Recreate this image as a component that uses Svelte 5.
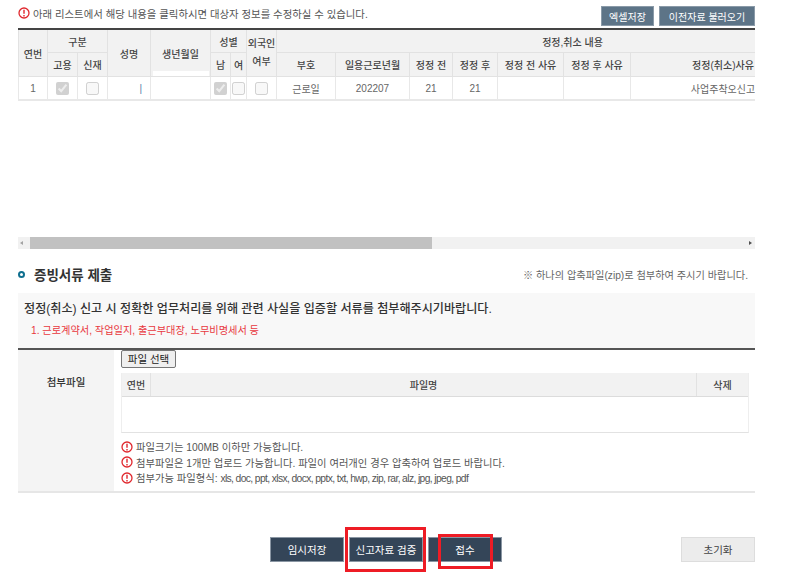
<script>
    const notes = [
        { text: "파일크기는 100MB 이하만 가능합니다." },
        { text: "첨부파일은 1개만 업로드 가능합니다. 파일이 여러개인 경우 압축하여 업로드 바랍니다." },
        { text: "첨부가능 파일형식: ", formats: "xls, doc, ppt, xlsx, docx, pptx, txt, hwp, zip, rar, alz, jpg, jpeg, pdf" }
    ];
</script>

{#snippet alertIcon()}
    <svg class="alert" viewBox="0 0 12 12" width="12" height="12">
        <circle cx="6" cy="6" r="5" fill="#fff" stroke="#e0282e" stroke-width="1.3" />
        <path d="M6 2.8v4" stroke="#e0282e" stroke-width="1.4" />
        <path d="M6 8v1.4" stroke="#e0282e" stroke-width="1.4" />
    </svg>
{/snippet}

<main class="page">
    <div class="top-bar">
        <p class="notice">{@render alertIcon()}아래 리스트에서 해당 내용을 클릭하시면 대상자 정보를 수정하실 수 있습니다.</p>
        <div class="top-buttons">
            <button class="btn-slate excel">엑셀저장</button>
            <button class="btn-slate prev">이전자료 불러오기</button>
        </div>
    </div>

    <div class="list-wrap">
        <table class="list">
            <colgroup>
                <col style="width:29px" /><col style="width:30px" /><col style="width:30px" />
                <col style="width:43px" /><col style="width:60px" /><col style="width:20px" />
                <col style="width:16px" /><col style="width:30px" /><col style="width:59px" />
                <col style="width:74px" /><col style="width:43px" /><col style="width:45px" />
                <col style="width:66px" /><col style="width:67px" /><col style="width:185px" />
                <col style="width:53px" />
            </colgroup>
            <thead>
                <tr class="r1">
                    <th rowspan="2">연번</th>
                    <th colspan="2">구분</th>
                    <th rowspan="2">성명</th>
                    <th rowspan="2">생년월일</th>
                    <th colspan="2">성별</th>
                    <th rowspan="2" class="foreign"><span>외국인</span><span>여부</span></th>
                    <th colspan="8">정정,취소 내용</th>
                </tr>
                <tr class="r2">
                    <th>고용</th><th>신재</th><th>남</th><th>여</th>
                    <th>부호</th><th>일용근로년월</th><th>정정 전</th><th>정정 후</th>
                    <th>정정 전 사유</th><th>정정 후 사유</th><th>정정(취소)사유</th><th></th>
                </tr>
            </thead>
            <tbody>
                <tr>
                    <td>1</td>
                    <td><input type="checkbox" checked disabled /></td>
                    <td><input type="checkbox" disabled /></td>
                    <td class="name"><span class="caret">|</span></td>
                    <td></td>
                    <td><input type="checkbox" checked disabled /></td>
                    <td><input type="checkbox" disabled /></td>
                    <td><input type="checkbox" disabled /></td>
                    <td>근로일</td>
                    <td>202207</td>
                    <td>21</td>
                    <td>21</td>
                    <td></td>
                    <td></td>
                    <td>사업주착오신고</td>
                    <td></td>
                </tr>
            </tbody>
        </table>
        <div class="mask"></div>
    </div>

    <div class="scrollbar">
        <span class="arrow left"></span>
        <div class="track"><div class="thumb"></div></div>
        <span class="arrow right"></span>
    </div>

    <div class="section-head">
        <h2><span class="dot"></span>증빙서류 제출</h2>
        <p>※ 하나의 압축파일(zip)로 첨부하여 주시기 바랍니다.</p>
    </div>

    <div class="guide">
        <strong>정정(취소) 신고 시 정확한 업무처리를 위해 관련 사실을 입증할 서류를 첨부해주시기바랍니다.</strong>
        <p>1. 근로계약서, 작업일지, 출근부대장, 노무비명세서 등</p>
    </div>

    <div class="attach">
        <div class="attach-label">첨부파일</div>
        <div class="attach-body">
            <button class="file-btn">파일 선택</button>
            <div class="file-table">
                <div class="file-head">
                    <span class="c-no">연번</span>
                    <span class="c-name">파일명</span>
                    <span class="c-del">삭제</span>
                </div>
                <div class="file-empty"></div>
            </div>
            <ul>
                {#each notes as note}
                    <li>
                        {@render alertIcon()}
                        <span class="note">{note.text}{#if note.formats}<span class="formats">{note.formats}</span>{/if}</span>
                    </li>
                {/each}
            </ul>
        </div>
    </div>

    <div class="actions">
        <div class="main-actions">
            <button class="btn-navy">임시저장</button>
            <button class="btn-navy">신고자료 검증</button>
            <button class="btn-navy">접수</button>
        </div>
        <button class="btn-reset">초기화</button>
    </div>

    <!-- 캡처 위에 그려진 빨간 표시 -->
    <div class="mark mark-a"></div>
    <div class="mark mark-b"></div>
</main>

<style>
    :global(body) {
        background: #fff;
        color: #444;
        font-family: "Liberation Sans", "Noto Sans CJK KR", sans-serif;
        font-size: 10px;
        margin: 0;
    }

    .page {
        position: relative;
        width: 737px;
        height: 579px;
        padding-left: 18px;
        overflow: hidden;
    }

    button { font-family: inherit; cursor: pointer; }
    p { margin: 0; }

    .top-bar {
        display: flex;
        justify-content: space-between;
        height: 28px;
        padding-top: 6px;
        box-sizing: border-box;
    }
    .notice { display: flex; align-items: center; height: 14px; font-size: 10.4px; color: #555; }
    .alert { flex: none; margin-right: 3px; }
    .top-buttons { display: flex; gap: 5px; }
    .btn-slate {
        height: 20px;
        padding: 0;
        background: #5d7487;
        border: 1px solid #8a9aa8;
        color: #fff;
        font-size: 10px;
    }
    .excel { width: 53px; }
    .prev { width: 96px; }

    /* 목록 */
    .list-wrap {
        position: relative;
        width: 737px;
        height: 209px;
        overflow: hidden;
    }
    .list {
        width: 850px;
        table-layout: fixed;
        border-collapse: collapse;
        border-top: 2px solid #444;
        font-size: 10px;
    }
    .list th {
        background: #f2f2f2;
        border: 1px solid #e2e2e2;
        border-top: 0;
        padding: 0;
        font-weight: 500;
        color: #444;
        text-align: center;
        white-space: nowrap;
        overflow: hidden;
    }
    .r1 th { height: 22px; }
    .r2 th { height: 23px; }
    .list td {
        height: 22px;
        padding: 0;
        border: 1px solid #e8e8e8;
        border-top: 0;
        border-bottom-width: 2px;
        text-align: center;
        color: #666;
        white-space: nowrap;
        overflow: hidden;
    }
    .foreign span { display: block; line-height: 18px; }
    .list input { margin: 3px 0 0; }
    .name { text-align: right !important; padding-right: 8px !important; }
    .caret { color: #5b7fa5; }
    .mask {
        position: absolute;
        left: 135px;
        top: 43px;
        width: 56px;
        height: 5px;
        background: #fff;
    }

    .scrollbar {
        display: flex;
        align-items: center;
        width: 737px;
        height: 12px;
        background: #f1f1f1;
    }
    .arrow { flex: none; width: 12px; height: 12px; position: relative; }
    .arrow::after {
        content: "";
        position: absolute;
        top: 4px;
        border: 2px solid transparent;
    }
    .left::after { left: 2px; border-right: 3px solid #a3a3a3; border-left: 0; }
    .right::after { right: 3px; border-left: 3px solid #505050; border-right: 0; }
    .track { flex: 1; height: 12px; }
    .thumb { width: 402px; height: 12px; background: #c1c1c1; }

    .section-head {
        display: flex;
        justify-content: space-between;
        align-items: center;
        height: 44px;
        padding: 6px 7px 0 0;
        box-sizing: border-box;
    }
    h2 {
        display: flex;
        align-items: center;
        margin: 0;
        font-size: 13.5px;
        font-weight: 700;
        color: #333;
    }
    .dot {
        width: 3px;
        height: 3px;
        margin-right: 9px;
        border: 2px solid #0f6f8f;
        border-radius: 50%;
    }
    .section-head p { font-size: 10.2px; color: #666; }

    .guide {
        height: 55px;
        padding: 8px 0 0 6px;
        box-sizing: border-box;
        background: #f8f8f8;
    }
    .guide strong {
        display: block;
        font-size: 12.1px;
        font-weight: 500;
        line-height: 17px;
        color: #333;
    }
    .guide p {
        margin: 6px 0 0 7px;
        font-size: 10.2px;
        line-height: 14px;
        color: #e8393f;
    }

    /* 첨부파일 */
    .attach {
        display: flex;
        height: 145px;
        box-sizing: border-box;
        border-top: 2px solid #555;
        border-bottom: 2px solid #e6e6e6;
    }
    .attach-label {
        flex: none;
        width: 96px;
        box-sizing: border-box;
        padding-top: 24px;
        background: #f4f4f4;
        font-size: 10.5px;
        font-weight: 500;
        text-align: center;
        color: #333;
    }
    .attach-body { flex: 1; padding: 0 6px 0 7px; }
    .file-btn {
        display: block;
        width: 55px;
        height: 18px;
        padding: 0;
        background: #efefef;
        border: 1px solid #767676;
        border-radius: 2px;
        color: #222;
        font-size: 10.5px;
        line-height: 14px;
    }
    .file-table { margin-top: 5px; border-bottom: 1px solid #e2e2e2; border-left: 1px solid #eee; border-right: 1px solid #eee; }
    .file-head {
        display: flex;
        height: 23px;
        background: #f2f2f2;
        border-bottom: 1px solid #dcdcdc;
        font-weight: 500;
        color: #444;
    }
    .file-head span { display: flex; align-items: center; justify-content: center; }
    .c-no { width: 28px; border-right: 1px solid #e2e2e2; }
    .c-name { flex: 1; }
    .c-del { width: 51px; border-left: 1px solid #e2e2e2; }
    .file-empty { height: 35px; }
    ul { margin: 6px 0 0; padding: 0; list-style: none; }
    li {
        display: flex;
        align-items: center;
        height: 15.5px;
        font-size: 10.3px;
        color: #555;
    }
    .formats { letter-spacing: -0.62px; }

    .actions {
        display: flex;
        justify-content: space-between;
        margin-top: 44px;
    }
    .main-actions {
        display: flex;
        gap: 5px;
        margin-left: 252px;
    }
    .btn-navy {
        width: 74px;
        height: 25px;
        padding: 0;
        background: #344558;
        border: 1px solid #8a96a3;
        color: #fff;
        font-size: 10.5px;
    }
    .btn-reset {
        width: 74px;
        height: 25px;
        padding: 0;
        background: #ececec;
        border: 1px solid #ddd;
        color: #444;
        font-size: 10.5px;
    }

    .mark {
        position: absolute;
        box-sizing: border-box;
        border: 3px solid #ee1c25;
    }
    .mark-a { left: 345px; top: 527px; width: 81px; height: 45px; }
    .mark-b { left: 438px; top: 534px; width: 55px; height: 35px; }
</style>
